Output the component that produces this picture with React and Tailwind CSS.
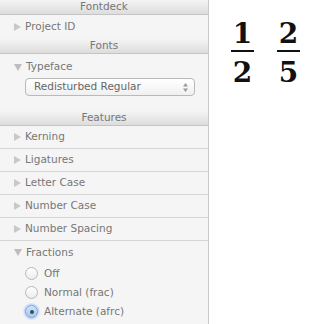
const font = { fontFamily: '"DejaVu Sans", "Liberation Sans", sans-serif' }

function Header({ children }) {
  return (
    <div className="h-[15px] flex items-center justify-center bg-gradient-to-b from-[#f4f4f4] to-[#dddddd] border-b border-[#c4c4c4] text-[10.5px] text-[#777]">
      {children}
    </div>
  )
}

function Tri({ open }) {
  return open ? (
    <svg width="8" height="7" viewBox="0 0 8 7" className="shrink-0"><path d="M0 0h8L4 7z" fill="#bdbdbd" /></svg>
  ) : (
    <svg width="7" height="8" viewBox="0 0 7 8" className="shrink-0"><path d="M0 0v8l7-4z" fill="#c8c8c8" /></svg>
  )
}

function Row({ label, open, last, h = 'h-[23px]' }) {
  return (
    <div className={`${h} flex items-center gap-[4px] pl-[14px] text-[10.5px] text-[#777] ${last ? '' : 'border-b border-[#d6d6d6]'}`}>
      <Tri open={open} />
      <span>{label}</span>
    </div>
  )
}

function Radio({ label, checked }) {
  return (
    <div className="h-[19px] flex items-center gap-[6px] pl-[25px] text-[10.5px] text-[#777]">
      {checked ? (
        <span className="w-[13px] h-[13px] rounded-full border border-[#7ea6d8] bg-gradient-to-b from-[#d3e3f7] to-[#a9c6ec] shadow-[0_0_2px_1px_rgba(110,160,230,0.55)] flex items-center justify-center">
          <span className="w-[4px] h-[4px] rounded-full bg-[#3a4a60]" />
        </span>
      ) : (
        <span className="w-[13px] h-[13px] rounded-full border border-[#b8b8b8] bg-gradient-to-b from-white to-[#ececec]" />
      )}
      <span>{label}</span>
    </div>
  )
}

function Frac({ n, d }) {
  return (
    <div className="flex flex-col items-center w-[23px]">
      <span className="leading-none">{n}</span>
      <span className="w-full h-[2px] bg-[#111] mt-[2px] mb-[7px]" />
      <span className="leading-none">{d}</span>
    </div>
  )
}

export default function App() {
  return (
    <div className="w-[322px] h-[324px] flex bg-white overflow-hidden" style={font}>
      <div className="w-[209px] shrink-0 bg-[#f5f5f5] border-r border-[#c8c8c8]">
        <Header>Fontdeck</Header>
        <Row label="Project ID" h="h-[24px]" last />
        <Header>Fonts</Header>
        <div className="pt-[3px] pb-[15px]">
          <Row label="Typeface" h="h-[20px]" open last />
          <div className="ml-[25px] mr-[13px] mt-[1px] h-[18px] rounded-[4px] border border-[#b9b9b9] bg-gradient-to-b from-white to-[#f0f0f0] flex items-center justify-between pl-[8px] pr-[6px] text-[10.5px] text-[#666]">
            <span>Redisturbed Regular</span>
            <svg width="5" height="9" viewBox="0 0 5 9">
              <path d="M0 3.5L2.5 0 5 3.5z M0 5.5L2.5 9 5 5.5z" fill="#9a9a9a" />
            </svg>
          </div>
        </div>
        <Header>Features</Header>
        <Row label="Kerning" />
        <Row label="Ligatures" />
        <Row label="Letter Case" />
        <Row label="Number Case" />
        <Row label="Number Spacing" />
        <Row label="Fractions" open last />
        <Radio label="Off" />
        <Radio label="Normal (frac)" />
        <Radio label="Alternate (afrc)" checked />
      </div>
      <div className="flex-1 flex items-start gap-[23px] pl-[22px] pt-[20px] text-[28px] font-bold text-[#111]" style={{ fontFamily: '"DejaVu Serif", "Liberation Serif", serif' }}>
        <Frac n="1" d="2" />
        <Frac n="2" d="5" />
      </div>
    </div>
  )
}
